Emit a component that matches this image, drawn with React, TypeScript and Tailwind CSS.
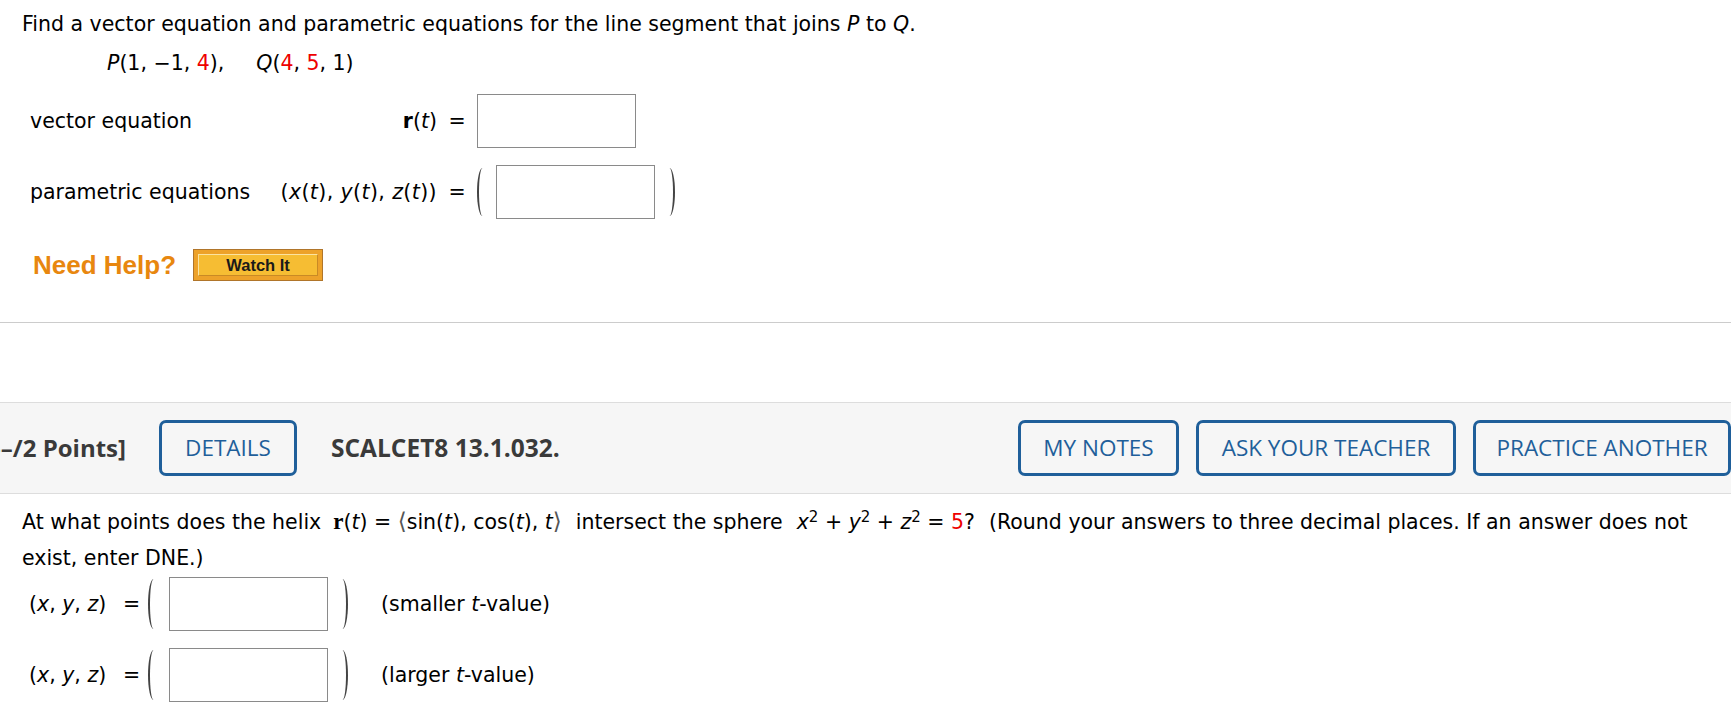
import React from "react";

const blue = "border-[#1f5f9a] text-[#1f5f9a]";

function Paren({ side, h = "h-[48px]" }: { side: "l" | "r"; h?: string }) {
  return (
    <span
      className={`inline-block w-[11px] ${h} rounded-[50%] border-[#444] ${
        side === "l" ? "border-l-2" : "border-r-2"
      }`}
    />
  );
}

function Box({ w }: { w: string }) {
  return <span className={`block ${w} h-[54px] border border-[#8a8a8a] bg-white`} />;
}

function I({ children }: { children: React.ReactNode }) {
  return <span className="italic">{children}</span>;
}

function Red({ children }: { children: React.ReactNode }) {
  return <span className="text-[#ee0000]">{children}</span>;
}

function BandButton({ label, w }: { label: string; w: string }) {
  return (
    <button
      className={`${w} h-[56px] shrink-0 rounded-[7px] border-[3px] ${blue} flex items-center justify-center text-[22.5px] font-['Open_Sans',sans-serif]`}
    >
      {label}
    </button>
  );
}

export default function App() {
  return (
    <div className="w-[1731px] h-[727px] overflow-hidden bg-white text-black font-['DejaVu_Sans',sans-serif] text-[20.5px]">
      {/* first question */}
      <div className="px-[22px]">
        <p className="pt-[12px] leading-[24px]">
          Find a vector equation and parametric equations for the line segment that joins <I>P</I> to <I>Q</I>.
        </p>
        <div className="mt-[15px] pl-[85px] leading-[24px] whitespace-nowrap">
          <I>P</I>(1, −1, <Red>4</Red>),
          <span className="ml-[32px]">
            <I>Q</I>(<Red>4</Red>, <Red>5</Red>, 1)
          </span>
        </div>

        <div className="mt-[19px] flex items-center pl-[8px] leading-[28px]">
          <span className="w-[246px]">vector equation</span>
          <span className="w-[161px] text-right">
            <b className="font-bold">r</b>(<I>t</I>)
          </span>
          <span className="w-[40px] text-center">=</span>
          <Box w="w-[159px]" />
        </div>

        <div className="mt-[17px] flex items-center pl-[8px] leading-[28px]">
          <span className="w-[246px]">parametric equations</span>
          <span className="w-[161px] text-right whitespace-nowrap tracking-[0.4px]">
            (<I>x</I>(<I>t</I>), <I>y</I>(<I>t</I>), <I>z</I>(<I>t</I>))
          </span>
          <span className="w-[40px] text-center">=</span>
          <Paren side="l" />
          <span className="ml-[8px]">
            <Box w="w-[159px]" />
          </span>
          <span className="ml-[9px] flex">
            <Paren side="r" />
          </span>
        </div>

        <div className="mt-[30px] flex items-center pl-[11px] leading-none">
          <span className="font-['Liberation_Sans',Arial,sans-serif] font-bold text-[26px] text-[#e8870f]">
            Need Help?
          </span>
          <span className="ml-[17px] w-[130px] h-[32px] border border-[#b0752a] bg-[#eda22a] p-[4px] flex">
            <span className="flex-1 flex items-center justify-center border border-[#c98a25] border-t-[#fbe3a0] border-l-[#fbe3a0] bg-[#f6bd33] font-['Liberation_Sans',Arial,sans-serif] font-bold text-[16.5px] text-[#1a1a1a]">
              Watch It
            </span>
          </span>
        </div>
      </div>

      <div className="mt-[41px] h-px bg-[#cccccc]" />

      {/* question header band */}
      <div className="mt-[79px] h-[92px] border-y border-[#dddddd] bg-[#f6f6f6] flex items-center font-['Open_Sans',sans-serif]">
        <div className="w-[126px] shrink-0 overflow-hidden flex justify-end">
          <span className="shrink-0 whitespace-nowrap font-bold text-[24px] text-[#3a3a3a]">[––/2 Points]</span>
        </div>
        <span className="ml-[33px]">
          <BandButton label="DETAILS" w="w-[138px]" />
        </span>
        <span className="ml-[34px] font-bold text-[24.5px] text-[#3a3a3a] whitespace-nowrap">SCALCET8 13.1.032.</span>
        <div className="ml-auto flex gap-[17px]">
          <BandButton label="MY NOTES" w="w-[161px]" />
          <BandButton label="ASK YOUR TEACHER" w="w-[260px]" />
          <BandButton label="PRACTICE ANOTHER" w="w-[258px]" />
        </div>
      </div>

      {/* second question */}
      <div className="px-[22px]">
        <p className="mt-[9px] leading-[36px] whitespace-nowrap">
          At what points does the helix
          <b className="ml-[12px] font-['Liberation_Serif',serif] font-bold text-[23px]">r</b>(<I>t</I>) ={" "}
          <span className="text-[#555] text-[23px]">⟨</span>sin(<I>t</I>), cos(<I>t</I>), <I>t</I>
          <span className="text-[#555] text-[23px]">⟩</span>
          <span className="ml-[14px]">intersect the sphere</span>
          <span className="ml-[14px]">
            <I>x</I>
            <sup className="text-[15px]">2</sup> + <I>y</I>
            <sup className="text-[15px]">2</sup> + <I>z</I>
            <sup className="text-[15px]">2</sup> = <Red>5</Red>?
          </span>
          <span className="ml-[14px]">(Round your answers to three decimal places. If an answer does not</span>
          <br />
          exist, enter DNE.)
        </p>

        {["smaller", "larger"].map((k, i) => (
          <div key={k} className={`${i === 0 ? "mt-[1px]" : "mt-[17px]"} flex items-center pl-[7px] leading-[28px]`}>
            <span className="w-[94px] whitespace-nowrap">
              (<I>x</I>, <I>y</I>, <I>z</I>)
            </span>
            <span className="w-[25px]">=</span>
            <Paren side="l" h="h-[50px]" />
            <span className="ml-[10px]">
              <Box w="w-[159px]" />
            </span>
            <span className="ml-[9px] flex">
              <Paren side="r" h="h-[50px]" />
            </span>
            <span className="ml-[33px]">
              ({k} <I>t</I>-value)
            </span>
          </div>
        ))}
      </div>
    </div>
  );
}
